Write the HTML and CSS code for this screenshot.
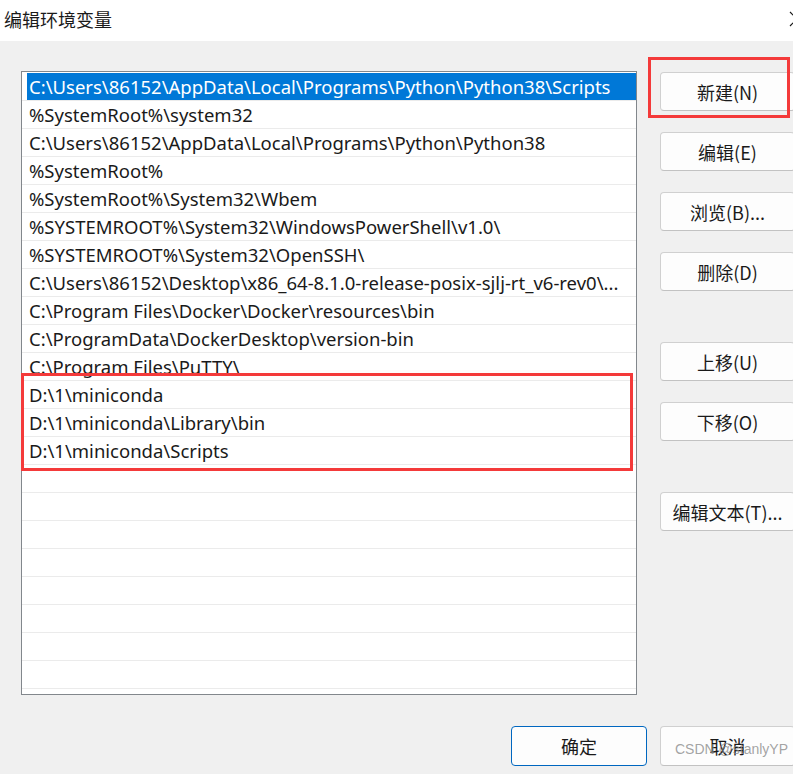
FILE: index.html
```html
<!DOCTYPE html>
<html lang="zh-CN">
<head>
    <meta charset="UTF-8">
    <meta name="viewport" content="width=device-width, initial-scale=1.0">
    <title>编辑环境变量</title>
    <link rel="stylesheet" href="styles.css">
</head>
<body>
    <div class="titlebar">
        <span class="title">编辑环境变量</span>
        <svg class="close" width="16" height="16" viewBox="0 0 16 16">
            <path d="M1 1 L15 15 M15 1 L1 15" stroke="#1a1a1a" stroke-width="1.2" fill="none"/>
        </svg>
    </div>

    <div class="dialog">
        <div class="main">
            <div class="pathlist">
                <div class="row selected"><span class="cell">C:\Users\86152\AppData\Local\Programs\Python\Python38\Scripts</span></div>
                <div class="row"><span class="cell">%SystemRoot%\system32</span></div>
                <div class="row"><span class="cell">C:\Users\86152\AppData\Local\Programs\Python\Python38</span></div>
                <div class="row"><span class="cell">%SystemRoot%</span></div>
                <div class="row"><span class="cell">%SystemRoot%\System32\Wbem</span></div>
                <div class="row"><span class="cell">%SYSTEMROOT%\System32\WindowsPowerShell\v1.0\</span></div>
                <div class="row"><span class="cell">%SYSTEMROOT%\System32\OpenSSH\</span></div>
                <div class="row"><span class="cell">C:\Users\86152\Desktop\x86_64-8.1.0-release-posix-sjlj-rt_v6-rev0\...</span></div>
                <div class="row"><span class="cell">C:\Program Files\Docker\Docker\resources\bin</span></div>
                <div class="row"><span class="cell">C:\ProgramData\DockerDesktop\version-bin</span></div>
                <div class="row"><span class="cell">C:\Program Files\PuTTY\</span></div>
                <div class="row"><span class="cell">D:\1\miniconda</span></div>
                <div class="row"><span class="cell">D:\1\miniconda\Library\bin</span></div>
                <div class="row"><span class="cell">D:\1\miniconda\Scripts</span></div>
                <div class="row"><span class="cell"></span></div>
                <div class="row"><span class="cell"></span></div>
                <div class="row"><span class="cell"></span></div>
                <div class="row"><span class="cell"></span></div>
                <div class="row"><span class="cell"></span></div>
                <div class="row"><span class="cell"></span></div>
                <div class="row"><span class="cell"></span></div>
                <div class="row"><span class="cell"></span></div>
                <div class="row"><span class="cell"></span></div>
            </div>

            <div class="actions">
                <button type="button" class="btn">新建(N)</button>
                <button type="button" class="btn">编辑(E)</button>
                <button type="button" class="btn">浏览(B)...</button>
                <button type="button" class="btn">删除(D)</button>
                <button type="button" class="btn group-gap">上移(U)</button>
                <button type="button" class="btn">下移(O)</button>
                <button type="button" class="btn group-gap">编辑文本(T)...</button>
            </div>

            <div class="mark mark-new"></div>
            <div class="mark mark-rows"></div>
        </div>

        <div class="footer">
            <button type="button" class="btn btn-default">确定</button>
            <button type="button" class="btn">取消</button>
            <span class="watermark">CSDN @stanlyYP</span>
        </div>
    </div>
</body>
</html>
```

FILE: styles.css
```css
html, body {
    margin: 0;
    padding: 0;
}

body {
    width: 793px;
    height: 774px;
    overflow: hidden;
    background-color: #f0f0f0;
    font-family: "Noto Sans", "Noto Sans CJK SC", sans-serif;
    color: #1a1a1a;
}

.titlebar {
    height: 41px;
    background-color: #ffffff;
    display: flex;
    align-items: center;
    justify-content: space-between;
    padding-left: 4px;
}

.title {
    font-family: "Noto Sans CJK SC", sans-serif;
    font-size: 18px;
    margin-top: -4px;
}

.close {
    margin-right: -12px;
    margin-top: -4px;
    flex-shrink: 0;
}

.dialog {
    position: relative;
}

.main {
    position: relative;
    display: flex;
    padding: 30px 0 0 21px;
}

.pathlist {
    width: 616px;
    height: 624px;
    box-sizing: border-box;
    border: 1px solid #82878c;
    background-color: #ffffff;
    padding-top: 1px;
    overflow: hidden;
    flex-shrink: 0;
}

.row {
    height: 28px;
    box-sizing: border-box;
    border-bottom: 1px solid #ebebeb;
    padding-left: 5px;
    display: flex;
}

.cell {
    flex: 1;
    padding-left: 2px;
    font-size: 18.5px;
    line-height: 27px;
    white-space: nowrap;
    overflow: hidden;
}

.row.selected .cell {
    background-color: #0078d7;
    color: #ffffff;
}

.actions {
    display: flex;
    flex-direction: column;
    gap: 21px;
    margin-left: 23px;
    padding-top: 1px;
}

.btn {
    width: 135px;
    height: 39px;
    flex-shrink: 0;
    box-sizing: border-box;
    background-color: #fdfdfd;
    border: 1px solid #d0d0d0;
    border-bottom-color: #c2c2c2;
    border-radius: 4px;
    font-family: "Noto Sans CJK SC", sans-serif;
    font-size: 18px;
    color: #1a1a1a;
    padding: 0;
}

.actions .group-gap {
    margin-top: 30px;
}

.footer {
    position: relative;
    display: flex;
    gap: 13px;
    padding: 31px 0 0 511px;
}

.footer .btn {
    height: 40px;
}

.btn-default {
    width: 136px;
    border: 1px solid #0067c0;
}

.watermark {
    position: absolute;
    left: 675px;
    top: 46px;
    font-family: "Liberation Sans", sans-serif;
    font-size: 14px;
    color: rgba(140, 140, 140, 0.8);
}

.mark {
    position: absolute;
    border: 3px solid #f43a3a;
    box-sizing: border-box;
}

.mark-new {
    left: 648px;
    top: 16px;
    width: 142px;
    height: 61px;
}

.mark-rows {
    left: 21px;
    top: 332px;
    width: 612px;
    height: 98px;
}
```
